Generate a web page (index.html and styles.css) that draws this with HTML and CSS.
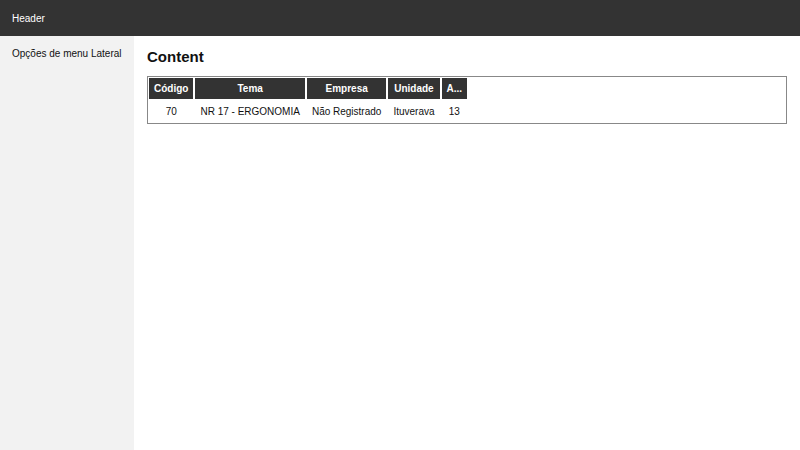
FILE: index.html
```html
<!DOCTYPE html>
<html lang="pt-BR">
<head>
  <meta charset="UTF-8">
  <meta name="viewport" content="width=device-width, initial-scale=1.0">
  <title>Treinamentos</title>
  <link rel="stylesheet" href="styles.css">
</head>
<body>
  <header class="topbar">Header</header>
  <div class="layout">
    <aside class="sidebar">Opções de menu Lateral</aside>
    <main class="content">
      <h2>Content</h2>
      <div class="table-box">
        <table>
          <thead>
            <tr>
              <th>Código</th>
              <th>Tema</th>
              <th>Empresa</th>
              <th>Unidade</th>
              <th title="Ano">A...</th>
            </tr>
          </thead>
          <tbody>
            <tr>
              <td>70</td>
              <td>NR 17 - ERGONOMIA</td>
              <td>Não Registrado</td>
              <td>Ituverava</td>
              <td>13</td>
            </tr>
          </tbody>
        </table>
      </div>
    </main>
  </div>
</body>
</html>
```

FILE: styles.css
```css
html, body {
  height: 100%;
}

body {
  margin: 0;
  display: flex;
  flex-direction: column;
  font-family: "Liberation Sans", Arial, Helvetica, sans-serif;
  font-size: 10px;
  color: #111;
  background-color: #fff;
}

.topbar {
  height: 36px;
  flex-shrink: 0;
  display: flex;
  align-items: center;
  padding: 0 12px;
  background-color: #333;
  color: #fff;
}

.layout {
  flex: 1;
  display: flex;
}

.sidebar {
  width: 134px;
  box-sizing: border-box;
  padding: 12px 0 0 12px;
  line-height: 12px;
  white-space: nowrap;
  background-color: #f2f2f2;
}

.content {
  flex: 1;
  padding: 12px 13px;
}

.content h2 {
  margin: 0 0 10px;
  font-size: 15px;
  line-height: 18px;
}

.table-box {
  border: 1px solid #888;
}

table {
  border-spacing: 2px;
  margin: -1px 0 -1px -1px;
}

th, td {
  height: 21px;
  box-sizing: border-box;
  padding: 0 5px;
  text-align: center;
  white-space: nowrap;
}

th {
  background-color: #333;
  color: #fff;
  font-weight: bold;
}
```
